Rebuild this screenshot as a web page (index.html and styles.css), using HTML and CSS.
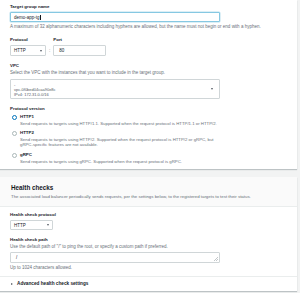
FILE: index.html
```html
<!DOCTYPE html>
<html lang="en">
<head>
<meta charset="utf-8">
<title>Target group</title>
<link rel="stylesheet" href="styles.css">
</head>
<body>
<div class="page">
  <section class="card card-top">
    <div class="field">
      <div class="label">Target group name</div>
      <div class="input input-focus wide">demo-app-tg<span class="caret"></span></div>
      <div class="hint">A maximum of 32 alphanumeric characters including hyphens are allowed, but the name must not begin or end with a hyphen.</div>
    </div>

    <div class="row-fields">
      <div class="field">
        <div class="label">Protocol</div>
        <div class="select sel-proto"><span>HTTP</span><span class="tri"></span></div>
      </div>
      <div class="colon">:</div>
      <div class="field">
        <div class="label">Port</div>
        <div class="input port">80</div>
      </div>
    </div>

    <div class="field vpc-field">
      <div class="label">VPC</div>
      <div class="hint">Select the VPC with the instances that you want to include in the target group.</div>
      <div class="select vpc wide">
        <div class="vpc-lines">
          <div>-</div>
          <div>vpc-0f0bed04caa90e8c</div>
          <div>IPv4: 172.31.0.0/16</div>
        </div>
        <span class="tri"></span>
      </div>
    </div>

    <div class="field pv-field">
      <div class="label">Protocol version</div>
      <div class="radio r1">
        <span class="dot on"></span>
        <div class="radio-body">
          <div class="radio-title">HTTP1</div>
          <div class="radio-desc">Send requests to targets using HTTP/1.1. Supported when the request protocol is HTTP/1.1 or HTTP/2.</div>
        </div>
      </div>
      <div class="radio r2">
        <span class="dot"></span>
        <div class="radio-body">
          <div class="radio-title">HTTP2</div>
          <div class="radio-desc narrow">Send requests to targets using HTTP/2. Supported when the request protocol is HTTP/2 or gRPC, but gRPC-specific features are not available.</div>
        </div>
      </div>
      <div class="radio r3">
        <span class="dot"></span>
        <div class="radio-body">
          <div class="radio-title">gRPC</div>
          <div class="radio-desc">Send requests to targets using gRPC. Supported when the request protocol is gRPC.</div>
        </div>
      </div>
    </div>
  </section>

  <section class="card card-hc">
    <header class="card-head">
      <h2>Health checks</h2>
      <p>The associated load balancer periodically sends requests, per the settings below, to the registered targets to test their status.</p>
    </header>
    <div class="card-body">
      <div class="field">
        <div class="label">Health check protocol</div>
        <div class="select sel-hc"><span>HTTP</span><span class="tri"></span></div>
      </div>
      <div class="field path-field">
        <div class="label">Health check path</div>
        <div class="hint">Use the default path of "/" to ping the root, or specify a custom path if preferred.</div>
        <div class="input textarea wide">/
          <svg class="grip" width="4" height="4" viewBox="0 0 4 4"><path d="M4 0L0 4M4 2L2 4" stroke="#9aa3a6" stroke-width="0.6"/></svg>
        </div>
        <div class="hint note">Up to 1024 characters allowed.</div>
      </div>
    </div>
    <div class="adv">
      <span class="adv-tri"></span>
      <span class="adv-text">Advanced health check settings</span>
    </div>
  </section>
</div>
</body>
</html>
```

FILE: styles.css
```css
* { box-sizing: border-box; }
html, body { margin: 0; padding: 0; }
body {
  background: #f2f3f3;
  font-family: "Liberation Sans", Arial, sans-serif;
  color: #16191f;
  width: 300px;
  height: 293px;
  overflow: hidden;
}
.page { width: 297px; }

.card {
  background: #fff;
  box-shadow: 0 1px 1px 0 rgba(0, 28, 36, 0.22);
}
.card-top { padding: 4px 0 5px 10px; }

.field { display: flex; flex-direction: column; align-items: flex-start; }
.label {
  font-size: 4.4px;
  font-weight: 700;
  line-height: 6px;
  color: #16191f;
}
.hint {
  font-size: 4.5px;
  line-height: 5px;
  color: #687078;
}
.wide { width: 210px; }

.input, .select {
  border: 1px solid #d0d6d8;
  border-radius: 1px;
  background: #fff;
  font-size: 4.5px;
  color: #16191f;
  display: flex;
  align-items: center;
  padding: 0 3px;
}
.input { margin-top: 2px; height: 10px; }
.input-focus {
  border-color: #86c8e2;
  box-shadow: 0 0 0 0.5px #b9e0ee;
}
.input-focus + .hint { margin-top: 2px; }
.caret {
  display: inline-block;
  width: 0;
  height: 5px;
  border-left: 0.6px solid #16191f;
  margin-left: 0.5px;
}

.row-fields {
  display: flex;
  align-items: flex-end;
  gap: 2px;
  margin-top: 8px;
}
.select {
  margin-top: 2px;
  height: 11px;
  justify-content: space-between;
}
.sel-proto { width: 36px; }
.port { width: 53px; height: 11px; padding-left: 5px; }
.colon {
  font-size: 4.5px;
  color: #545b64;
  height: 11px;
  line-height: 11px;
  padding: 0 1px;
}
.tri {
  width: 0;
  height: 0;
  border-left: 1.7px solid transparent;
  border-right: 1.7px solid transparent;
  border-top: 2px solid #545b64;
}

.vpc-field { margin-top: 7px; }
.vpc-field .hint { margin-top: 1px; }
.select.vpc {
  margin-top: 4px;
  height: 20px;
  align-items: center;
  padding: 0 6px 0 3px;
}
.vpc-lines {
  font-size: 4px;
  line-height: 5px;
  color: #16191f;
  align-self: flex-start;
  padding-top: 1.5px;
}
.vpc-lines div:nth-child(n+2) { color: #545b64; }

.pv-field { margin-top: 7px; }
.radio { display: flex; gap: 3px; align-items: flex-start; }
.r1 { margin-top: 2px; }
.r2 { margin-top: 4px; }
.r3 { margin-top: 5px; }
.dot {
  width: 5px;
  height: 5px;
  border-radius: 50%;
  border: 0.7px solid #aab7b8;
  margin-top: 0.5px;
  margin-left: 2px;
  flex: none;
  background: #fff;
}
.dot.on {
  border: 1.8px solid #0073bb;
  background: #fff;
}
.radio-title {
  font-size: 4.4px;
  line-height: 6px;
  font-weight: 700;
  color: #16191f;
}
.radio-desc {
  font-size: 4.3px;
  line-height: 5px;
  color: #687078;
  margin-top: 1px;
}
.radio-desc.narrow { width: 200px; }

.card-hc { margin-top: 8px; }
.card-head {
  background: #fafafa;
  border-bottom: 1px solid #eaeded;
  padding: 7px 0 7px 11px;
}
.card-head h2 {
  margin: 0;
  font-size: 6.3px;
  line-height: 8px;
  font-weight: 700;
  color: #16191f;
}
.card-head p {
  margin: 2px 0 0;
  font-size: 4.35px;
  line-height: 5px;
  color: #687078;
}
.card-body { padding: 5px 0 6px 10px; }
.sel-hc { width: 43px; height: 10px; }
.path-field { margin-top: 7px; }
.path-field .hint { margin-top: 1px; }
.textarea {
  margin-top: 3px;
  height: 11px;
  position: relative;
  padding-left: 5px;
}
.grip { position: absolute; right: 1px; bottom: 1px; }
.path-field .note { margin-top: 2px; }

.adv {
  border-top: 1px solid #eaeded;
  padding: 3px 0 4px 11px;
  display: flex;
  align-items: center;
  gap: 4px;
  height: 15px;
}
.adv-tri {
  width: 0;
  height: 0;
  border-top: 1.7px solid transparent;
  border-bottom: 1.7px solid transparent;
  border-left: 2.2px solid #545b64;
}
.adv-text {
  font-size: 4.7px;
  font-weight: 700;
  line-height: 8px;
  color: #16191f;
}
```
